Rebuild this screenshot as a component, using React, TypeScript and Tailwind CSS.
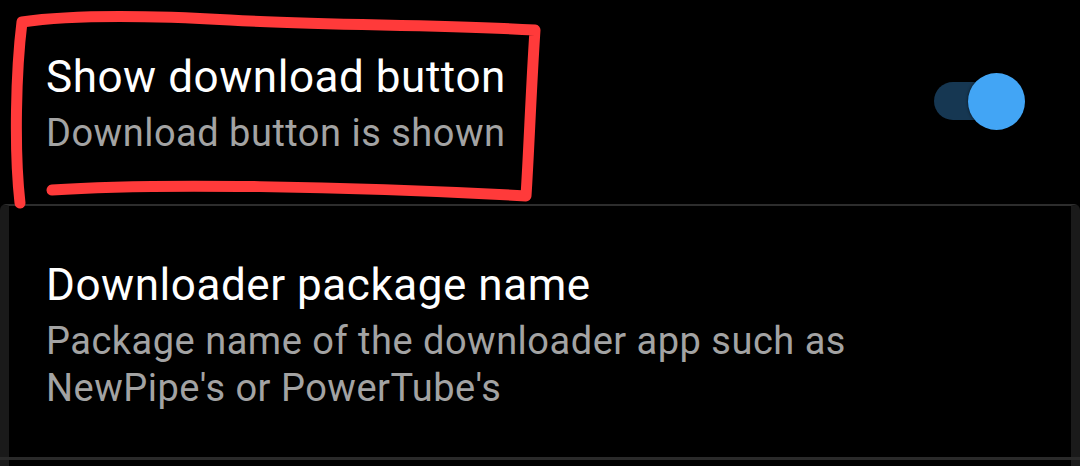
import React from "react";

function Switch({ on }: { on: boolean }) {
  return (
    <div className="relative mb-[6px] h-[57px] w-[91px] shrink-0">
      <div
        className={`absolute left-0 top-[9px] h-[38px] w-[72px] rounded-full ${on ? "bg-[#163752]" : "bg-[#555]"}`}
      />
      <div
        className={`absolute top-0 h-[57px] w-[57px] rounded-full shadow-[0_0_3px_rgba(0,0,0,0.7)] ${
          on ? "right-0 bg-[#42a5f5]" : "left-0 bg-[#bdbdbd]"
        }`}
      />
    </div>
  );
}

function PrefText({ title, summary }: { title: string; summary: React.ReactNode }) {
  return (
    <div className="min-w-0">
      <p className="text-[44px] leading-[52px] tracking-[0.55px] text-white">{title}</p>
      <p className="mt-[7px] text-[38px] leading-[47px] tracking-[0.5px] text-[#a3a3a3]">{summary}</p>
    </div>
  );
}

export default function App() {
  return (
    <div className="relative h-[466px] w-[1080px] overflow-hidden bg-black font-['Roboto','Noto_Sans',sans-serif] antialiased">
      <div className="flex h-[204px] items-center justify-between pl-[46px] pr-[55px] pt-[4px]">
        <PrefText title="Show download button" summary="Download button is shown" />
        <Switch on />
      </div>

      <div className="h-[262px] rounded-tl-[6px] rounded-tr-[6px] border-x-[9px] border-t-[2px] border-x-[#1a1a1a] border-t-[#2d2d2d]">
        <div className="h-[251px] pl-[37px] pr-[40px] pt-[53px]">
          <PrefText
            title="Downloader package name"
            summary={
              <>
                Package name of the downloader app such as
                <br />
                NewPipe's or PowerTube's
              </>
            }
          />
        </div>
        <div className="-mx-[9px] h-[3px] bg-[#2a2a2a]" />
      </div>

      {/* hand-drawn highlight from the screenshot */}
      <svg
        className="pointer-events-none absolute left-0 top-0"
        width="1080"
        height="466"
        viewBox="0 0 1080 466"
        fill="none"
      >
        <path
          d="M52 190 C150 183 350 186 526 196 C529 150 531 90 535 30 C430 24 330 26 230 20 C140 15 70 15 22 22 C16 70 14 150 20 203"
          stroke="#ff3a3a"
          strokeWidth="11"
          strokeLinecap="round"
          strokeLinejoin="round"
        />
      </svg>
    </div>
  );
}
